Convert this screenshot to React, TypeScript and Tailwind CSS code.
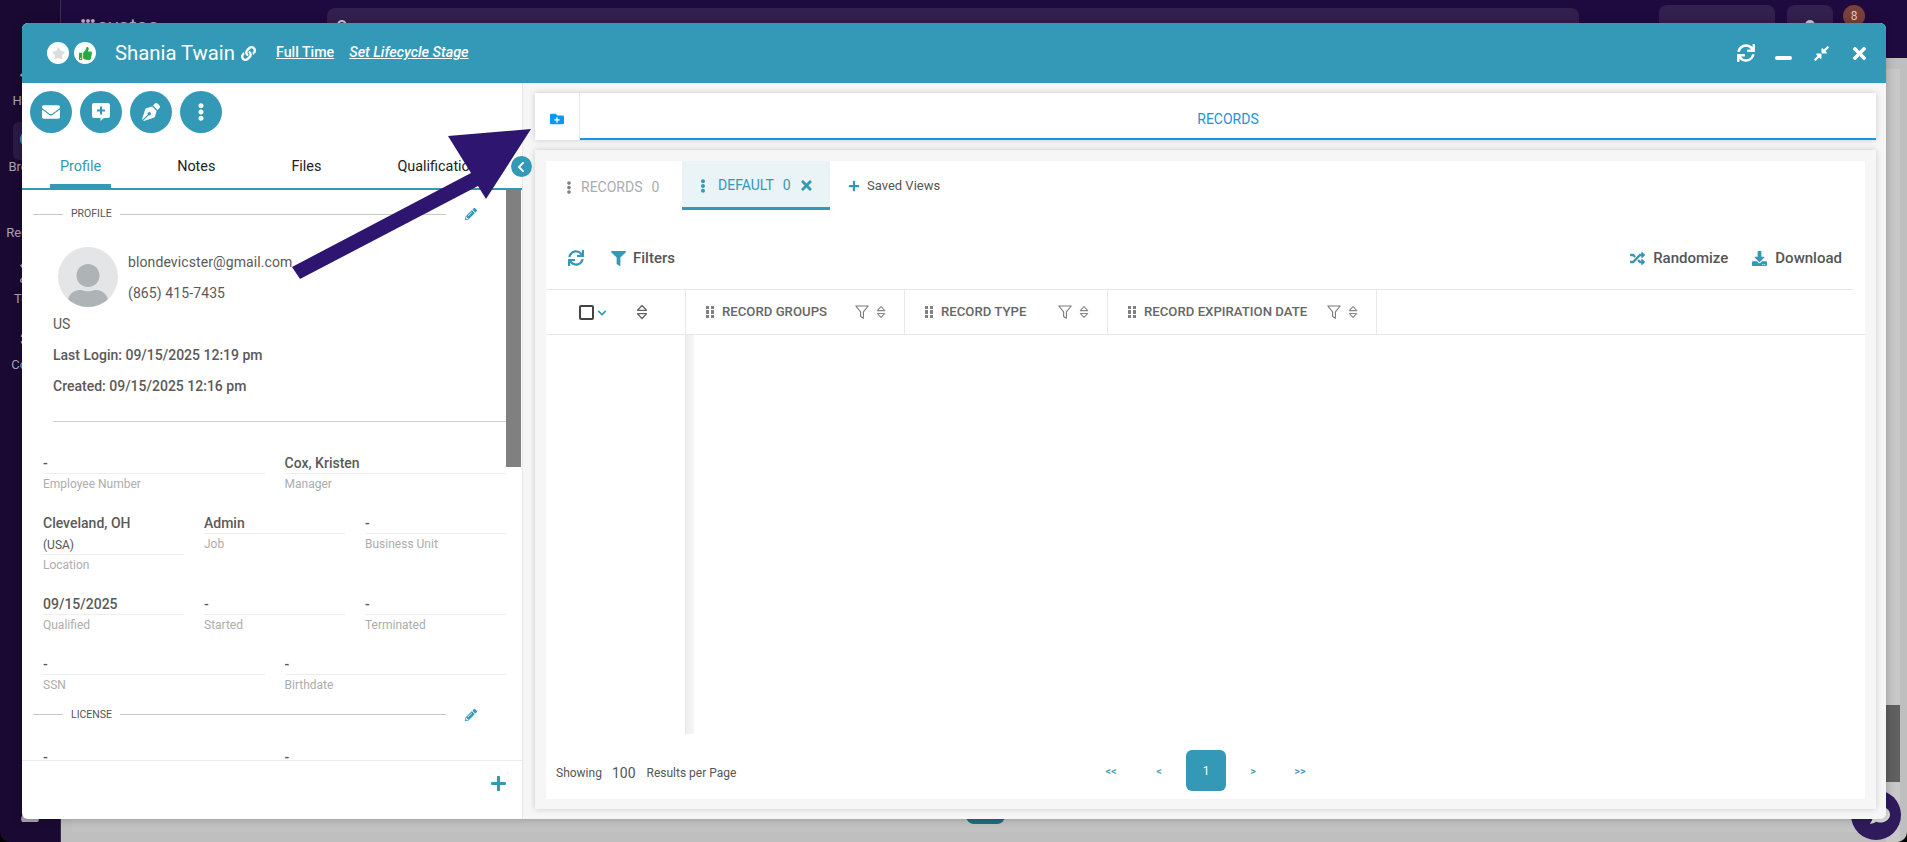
import { FaEnvelope, FaPenNib, FaEllipsisV, FaPencilAlt, FaStar, FaThumbsUp, FaLink, FaSync, FaCompressAlt, FaTimes, FaPlus, FaFilter, FaRandom, FaDownload, FaFolderPlus, FaChevronLeft, FaChevronDown, FaUser, FaComment, FaHome, FaSearch, FaRegFileAlt, FaTools, FaCog, FaEllipsisH } from 'react-icons/fa';

function SortIcon({ className }: { className?: string }) {
  return (
    <svg viewBox="0 0 12 16" fill="none" stroke="currentColor" strokeWidth="1.3" strokeLinejoin="round" className={className}>
      <path d="M1.5 6.3 6 1.5l4.5 4.8z" />
      <path d="M1.5 9.7 6 14.5l4.5-4.8z" />
    </svg>
  );
}

function FilterOutline() {
  return (
    <svg viewBox="0 0 14 14" fill="none" stroke="#7b7b7b" strokeWidth="1.1" strokeLinejoin="round" className="w-[14px] h-[14px]">
      <path d="M.8 1h12.4L8.4 6.8v6.4l-2.8-1.7V6.8z" />
    </svg>
  );
}

function CommentPlus() {
  return (
    <svg viewBox="0 0 18 18" className="w-[18px] h-[18px]">
      <path fill="#fff" d="M2 0h14a2 2 0 0 1 2 2v11a2 2 0 0 1-2 2h-4l-3.5 3v-3H2a2 2 0 0 1-2-2V2a2 2 0 0 1 2-2z" />
      <path fill="#3399b6" d="M8 3.5h2v3h3v2h-3v3H8v-3H5v-2h3z" />
    </svg>
  );
}

function Grip() {
  return (
    <span className="grid grid-cols-2 gap-x-[2px] gap-y-[1px] w-[8px] shrink-0">
      {[0, 1, 2, 3, 4, 5].map(i => <span key={i} className="w-[3px] h-[3.5px] bg-[#808080]" />)}
    </span>
  );
}

function SectionTitle({ title }: { title: string }) {
  return (
    <div className="flex items-center h-[16px] pl-[11px] pr-[29px]">
      <span className="w-[30px] h-px bg-[#c8c8c8]" />
      <span className="mx-[8px] text-[10.5px] text-[#555] uppercase">{title}</span>
      <span className="flex-1 h-px bg-[#c8c8c8]" />
      <FaPencilAlt className="ml-[19px] w-[12px] h-[12px] text-[#3399b6]" />
    </div>
  );
}

function Field({ label, value, sub }: { label: string; value: string; sub?: string }) {
  return (
    <div>
      <div className="border-b border-[#eeeeee]">
        <div className="h-[20px] leading-[20px] text-[14px] font-medium text-[#5a5a5a]">{value}</div>
        {sub && <div className="h-[21px] pt-[2px] leading-[20px] text-[12px] text-[#555]">{sub}</div>}
      </div>
      <div className="h-[17px] leading-[20px] text-[12px] text-[#adadad]">{label}</div>
    </div>
  );
}

function CircleBtn({ children }: { children: React.ReactNode }) {
  return <button className="w-[42px] h-[42px] rounded-full bg-[#3399b6] flex items-center justify-center text-white">{children}</button>;
}

function Column({ name, width, textW }: { name: string; width: number; textW: number }) {
  return (
    <div className="flex items-center h-full border-r border-[#e8e8e8] pl-[20px]" style={{ width }}>
      <Grip />
      <span className="ml-[8px] text-[13.2px] font-medium text-[#666] whitespace-nowrap" style={{ width: textW }}>{name}</span>
      <FilterOutline />
      <SortIcon className="ml-[7px] w-[10px] h-[14px] text-[#8a8a8a]" />
    </div>
  );
}

export default function App() {
  const sideItems = [
    { name: 'Home', icon: <FaHome className="w-[20px] h-[20px]" /> },
    { name: 'Browse', icon: <FaSearch className="w-[20px] h-[20px] text-[#3399b6]" /> },
    { name: 'Records', icon: <FaRegFileAlt className="w-[20px] h-[20px] text-[#dddddd]" /> },
    { name: 'Tools', icon: <FaTools className="w-[20px] h-[20px]" /> },
    { name: 'Config', icon: <FaCog className="w-[20px] h-[20px]" /> },
  ];
  return (
    <div className="relative w-full h-[842px] bg-black overflow-hidden font-[Roboto,sans-serif]">
      {/* dimmed page behind the modal */}
      <div className="flex h-full rounded-b-[10px] overflow-hidden">
        <aside className="w-[61px] shrink-0 bg-[#1a0a33] border-r border-[#3a2d50] pt-[65px] pb-[20px] flex flex-col items-center text-[13px] text-[#a9a3b4]">
          {sideItems.map(s => (
            <div key={s.name} className="h-[66px] flex flex-col items-center">
              {s.name === 'Browse' ? (
                <span className="-mt-[9px] -mb-[2px] w-[34px] h-[38px] rounded-[6px] bg-[#2a1a45] flex items-center justify-center shrink-0">{s.icon}</span>
              ) : (
                <span className="h-[20px] mb-[7px] shrink-0">{s.icon}</span>
              )}
              <span className="leading-[18px] whitespace-nowrap">{s.name}</span>
            </div>
          ))}
          <div className="mt-auto flex flex-col items-center gap-[20px]">
            <FaEllipsisV className="w-[20px] h-[20px]" />
            <FaRegFileAlt className="w-[20px] h-[20px]" />
            <FaUser className="w-[20px] h-[20px]" />
          </div>
        </aside>
        <div className="flex-1 flex flex-col bg-[#bfbfbf]">
          <div className="h-[58px] bg-[#1f0a40] flex items-start pt-[8px] shrink-0">
            <span className="ml-[20px] mt-[6px] w-[247px] flex items-start">
              <FaEllipsisH className="w-[14px] h-[14px] text-[#b9b3c4]" />
              <span className="ml-[2px] text-[21px] leading-[24px] text-[#b9b3c4]">avatas</span>
            </span>
            <div className="-ml-[1px] w-[1252px] h-[40px] rounded-[8px] bg-[#32204f] flex justify-between px-[10px] pt-[12px]">
              <FaSearch className="w-[12px] h-[12px] text-[#d0ccd8]" />
              <FaChevronDown className="w-[10px] h-[10px] text-[#d0ccd8] mr-[3px] mt-[1px]" />
            </div>
            <div className="ml-[80px] -mt-[3px] w-[116px] h-[40px] rounded-[8px] bg-[#32204f]" />
            <div className="ml-[12px] -mt-[3px] w-[46px] h-[40px] rounded-[8px] bg-[#32204f] flex justify-center pt-[15px]">
              <span className="w-[10px] h-[10px] rounded-full bg-[#cfcbd6]" />
            </div>
            <div className="ml-[10px] -mt-[3px] w-[22px] h-[22px] rounded-full bg-[#7a3f3a] text-[#d9c9c6] text-[12px] leading-[22px] text-center">8</div>
          </div>
          <div className="flex-1 flex justify-end pr-[7px] pt-[11px] pl-[11px]">
            <div className="flex-1 h-[763px] bg-[#c3c3c3]" />
            <div className="w-[14px] flex flex-col bg-[#c8c8c8]">
              <div className="mt-[636px] h-[77px] bg-[#606060]" />
            </div>
          </div>
        </div>
      </div>

      <div className="absolute left-[966px] top-[812px] w-[39px] h-[12px] rounded-b-[8px] bg-[#216d84]" />
      <div className="absolute left-[1851px] top-[790px] w-[50px] h-[50px] rounded-full bg-[#2f1a5c] flex items-center justify-center">
        <FaComment className="w-[20px] h-[20px] text-[#ddd] ml-[8px]" />
      </div>

      {/* modal */}
      <div className="absolute left-[22px] top-[23px] w-[1864px] h-[796px] rounded-[6px] overflow-hidden bg-white flex flex-col shadow-[0_0_10px_rgba(0,0,0,0.25)]">
        <header className="h-[60px] shrink-0 bg-[#3399b6] flex items-center text-white pl-[25px]">
          <span className="w-[22px] h-[22px] rounded-full bg-white flex items-center justify-center"><FaStar className="w-[13px] h-[13px] text-[#dcdcdc]" /></span>
          <span className="ml-[5px] w-[22px] h-[22px] rounded-full bg-white flex items-center justify-center"><FaThumbsUp className="w-[13px] h-[13px] text-[#2aa845]" /></span>
          <span className="ml-[19px] text-[20.3px] leading-none">Shania Twain</span>
          <FaLink className="ml-[6px] w-[15px] h-[15px]" />
          <a className="ml-[20px] text-[14.2px] font-medium underline">Full Time</a>
          <a className="ml-[15px] text-[14.4px] font-medium italic underline">Set Lifecycle Stage</a>
          <div className="ml-auto flex items-center pr-[17px]">
            <FaSync className="w-[18px] h-[18px]" />
            <span className="ml-[20px] mt-[10px] w-[17px] h-[4px] rounded-full bg-white" />
            <FaCompressAlt className="ml-[21px] w-[17px] h-[17px]" />
            <FaTimes className="ml-[20px] w-[19px] h-[19px]" />
          </div>
        </header>

        <div className="flex-1 flex min-h-0">
          {/* left panel */}
          <div className="w-[501px] shrink-0 flex flex-col border-r border-[#e6e8e8]">
            <div className="flex gap-[8px] pl-[8px] pt-[8px]">
              <CircleBtn><FaEnvelope className="w-[18px] h-[18px]" /></CircleBtn>
              <CircleBtn><CommentPlus /></CircleBtn>
              <CircleBtn><FaPenNib className="w-[18px] h-[18px]" /></CircleBtn>
              <CircleBtn><FaEllipsisV className="w-[18px] h-[18px]" /></CircleBtn>
            </div>
            <nav className="mt-[9px] h-[48px] flex gap-[56px] pl-[28px] border-b-2 border-[#3399b6] text-[14.4px] text-[#222] overflow-hidden w-[500px]">
              <span className="relative px-[10px] pt-[3px] h-full flex items-center text-[#3399b6]">Profile<span className="absolute left-0 right-0 bottom-0 h-[4px] bg-[#3399b6]" /></span>
              <span className="px-[10px] pt-[3px] h-full flex items-center">Notes</span>
              <span className="px-[10px] pt-[3px] h-full flex items-center">Files</span>
              <span className="px-[10px] pt-[3px] h-full flex items-center">Qualifications</span>
            </nav>
            <div className="flex-1 min-h-0 flex overflow-hidden">
              <div className="w-[484px] shrink-0 pt-[16px]">
                <SectionTitle title="Profile" />
                <div className="mt-[25px] flex pl-[36px] text-[14px] text-[#5a5a5a]">
                  <span className="w-[60px] h-[60px] rounded-full bg-[#e3e5e6] overflow-hidden flex items-end justify-center shrink-0">
                    <FaUser className="w-[46px] h-[46px] text-[#aeb3b5] -mb-[3px]" />
                  </span>
                  <div className="ml-[10px] leading-[31px] tracking-[.1px]">
                    <div>blondevicster@gmail.com</div>
                    <div>(865) 415-7435</div>
                  </div>
                </div>
                <div className="ml-[31px] text-[14px] font-medium leading-[31px] text-[#5a5a5a] -mt-[.5px]">
                  <div className="font-normal">US</div>
                  <div>Last Login: 09/15/2025 12:19 pm</div>
                  <div>Created: 09/15/2025 12:16 pm</div>
                  <div className="mt-[19px] h-px bg-[#cfcfcf]" />
                </div>
                <div className="pl-[21px] mt-[31px] flex flex-col gap-[22px]">
                  <div className="grid grid-cols-2 gap-x-[20px]">
                    <Field label="Employee Number" value="-" />
                    <Field label="Manager" value="Cox, Kristen" />
                  </div>
                  <div className="grid grid-cols-3 gap-x-[20px]">
                    <Field label="Location" value="Cleveland, OH" sub="(USA)" />
                    <Field label="Job" value="Admin" />
                    <Field label="Business Unit" value="-" />
                  </div>
                  <div className="grid grid-cols-3 gap-x-[20px]">
                    <Field label="Qualified" value="09/15/2025" />
                    <Field label="Started" value="-" />
                    <Field label="Terminated" value="-" />
                  </div>
                  <div className="grid grid-cols-2 gap-x-[20px]">
                    <Field label="SSN" value="-" />
                    <Field label="Birthdate" value="-" />
                  </div>
                </div>
                <div className="mt-[15px]"><SectionTitle title="License" /></div>
                <div className="pl-[21px] mt-[24px] grid grid-cols-2 gap-x-[20px]">
                  <Field label="" value="-" />
                  <Field label="" value="-" />
                </div>
              </div>
              <div className="w-[15px] h-[277px] bg-[#808080] shrink-0" />
            </div>
            <div className="h-[59px] shrink-0 border-t border-[#e8eced] flex justify-end items-start pt-[14px] pr-[15px]">
              <FaPlus className="w-[17px] h-[17px] text-[#3399b6]" />
            </div>
          </div>

          {/* right panel */}
          <div className="flex-1 bg-[#f6f6f6] pl-[12px] pr-[10px] py-[10px] flex flex-col gap-[10px] min-w-0">
            <div className="h-[47px] shrink-0 flex bg-white shadow-[0_0_6px_rgba(0,0,0,0.18)]">
              <div className="w-[45px] border-r border-[#e8e8e8] flex items-center justify-center pt-[5px]">
                <FaFolderPlus className="w-[14px] h-[14px] text-[#0d96f2]" />
              </div>
              <div className="flex-1 border-b-2 border-[#1a94da] flex items-center justify-center text-[14px] text-[#1a94da] pt-[7px]">RECORDS</div>
            </div>

            <div className="flex-1 min-h-0 p-[11px] pb-[10px] bg-[#f6f6f6] shadow-[0_0_6px_rgba(0,0,0,0.18)]">
              <div className="h-full bg-white flex flex-col">
                <div className="h-[49px] shrink-0 flex items-stretch">
                  <div className="w-[136px] flex items-center pl-[18px] pt-[4px] text-[14px] text-[#a9adb0]">
                    <FaEllipsisV className="w-[10px] h-[13px] text-[#808080]" />
                    <span className="ml-[7px]">RECORDS</span>
                    <span className="ml-[9px]">0</span>
                  </div>
                  <div className="w-[148px] flex items-center pl-[16px] pt-[3px] bg-[#eaf3f6] border-b-[3px] border-[#3399b6] text-[14px] text-[#3399b6]">
                    <FaEllipsisV className="w-[10px] h-[14px]" />
                    <span className="ml-[10px]">DEFAULT</span>
                    <span className="ml-[9px]">0</span>
                    <FaTimes className="ml-[8px] w-[15px] h-[15px]" />
                  </div>
                  <div className="flex items-center pl-[18px] pt-[1px] text-[13px] text-[#555]">
                    <FaPlus className="w-[12px] h-[12px] text-[#3399b6]" />
                    <span className="ml-[7px]">Saved Views</span>
                  </div>
                </div>

                <div className="h-[80px] shrink-0 mr-[12px] border-b border-[#e8e8e8] flex items-center pt-[17px] text-[15px] font-medium text-[#555]">
                  <FaSync className="ml-[22px] w-[16px] h-[16px] text-[#3399b6]" />
                  <FaFilter className="ml-[27px] w-[15px] h-[15px] text-[#3399b6]" />
                  <span className="ml-[7px]">Filters</span>
                  <FaRandom className="ml-auto w-[15px] h-[15px] text-[#3399b6]" />
                  <span className="ml-[8px]">Randomize</span>
                  <FaDownload className="ml-[24px] w-[15px] h-[15px] text-[#3399b6]" />
                  <span className="ml-[8px] mr-[11px]">Download</span>
                </div>

                <div className="h-[45px] shrink-0 flex border-b border-[#e8e8e8]">
                  <div className="w-[140px] shrink-0 flex items-center border-r border-[#e8e8e8] pl-[33px]">
                    <span className="w-[15px] h-[15px] rounded-[2px] border-2 border-[#444]" />
                    <FaChevronDown className="ml-[3px] w-[10px] h-[10px] text-[#3399b6] mt-[2px]" />
                    <SortIcon className="ml-[29px] w-[12px] h-[16px] text-[#666]" />
                  </div>
                  <Column name="RECORD GROUPS" width={219} textW={133} />
                  <Column name="RECORD TYPE" width={203} textW={117} />
                  <Column name="RECORD EXPIRATION DATE" width={269} textW={183} />
                </div>

                <div className="flex-1 min-h-0 flex">
                  <div className="w-[140px] shrink-0 border-r border-[#e8e8e8]" />
                  <div className="w-[8px] bg-gradient-to-r from-[#eeeeee] to-[#f6f6f6]" />
                </div>

                <div className="h-[65px] shrink-0 flex items-start text-[12px] text-[#555]">
                  <div className="w-[549px] pl-[10px] pt-[30px] flex items-center">
                    <span>Showing</span>
                    <span className="ml-[10px] text-[14px] leading-[16px]">100</span>
                    <span className="ml-[11px]">Results per Page</span>
                  </div>
                  <div className="flex items-center pt-[16px] text-[11px] font-medium text-[#3399b6]">
                    <span className="mt-[3px] w-[32px] text-center">&lt;&lt;</span>
                    <span className="mt-[3px] ml-[16px] w-[32px] text-center">&lt;</span>
                    <span className="ml-[11px] w-[40px] h-[41px] rounded-[6px] bg-[#3399b6] text-white text-[12px] font-normal flex items-center justify-center">1</span>
                    <span className="mt-[3px] ml-[11px] w-[32px] text-center">&gt;</span>
                    <span className="mt-[3px] ml-[15px] w-[32px] text-center">&gt;&gt;</span>
                  </div>
                </div>
              </div>
            </div>
          </div>
        </div>
      </div>

      {/* collapse toggle */}
      <span className="absolute left-[511px] top-[156px] w-[21px] h-[21px] rounded-full bg-[#3399b6] flex items-center justify-center text-white">
        <FaChevronLeft className="w-[12px] h-[12px] -ml-[1px]" />
      </span>

      {/* annotation arrow */}
      <svg className="absolute left-0 top-0 w-[1907px] h-[842px] pointer-events-none" viewBox="0 0 1907 842">
        <polygon points="292,267 471,173 448,136 531,129 486,199 478,186 300,279" fill="#2e1570" />
      </svg>
    </div>
  );
}
